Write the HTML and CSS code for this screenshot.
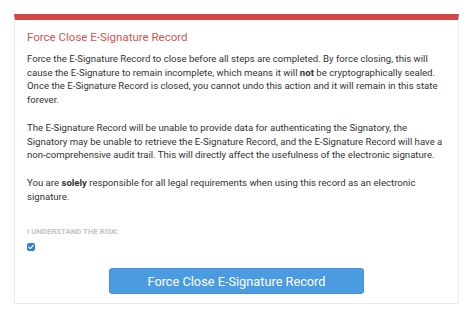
FILE: index.html
```html
<!DOCTYPE html>
<html>
<head>
<meta charset="utf-8">
<link rel="stylesheet" href="styles.css">
</head>
<body>
<div class="card">
  <h1 class="title">Force Close E-Signature Record</h1>
  <p class="text">Force the E-Signature Record to close before all steps are completed. By force closing, this will cause the E-Signature to remain incomplete, which means it will <b>not</b> be cryptographically sealed. Once the E-Signature Record is closed, you cannot undo this action and it will remain in this state forever.</p>
  <p class="text">The E-Signature Record will be unable to provide data for authenticating the Signatory, the Signatory may be unable to retrieve the E-Signature Record, and the E-Signature Record will have a non-comprehensive audit trail. This will directly affect the usefulness of the electronic signature.</p>
  <p class="text">You are <b>solely</b> responsible for all legal requirements when using this record as an electronic signature.</p>
  <div class="label">I UNDERSTAND THE RISK:</div>
  <span class="check"><svg width="8" height="8" viewBox="0 0 8 8"><path d="M1.8 4.2 L3.3 5.7 L6.2 2.3" fill="none" stroke="#fff" stroke-width="1.2" stroke-linecap="round" stroke-linejoin="round"/></svg></span>
  <div class="actions"><button class="btn">Force Close E-Signature Record</button></div>
</div>
</body>
</html>
```
FILE: styles.css
```css
html, body { margin: 0; padding: 0; background: #fff; }
body { padding: 14px 15px 0 14px; font-family: Roboto, "Noto Sans", sans-serif; }
.card {
  border: 1px solid #ebebeb;
  border-top: 6px solid #d44545;
  padding: 8px 12px 9px 12px;
  height: 290px;
  box-sizing: border-box;
  width: 445px;
}
.title { margin: 0 0 6px 0; font-size: 11.5px; font-weight: 400; color: #d9534f; line-height: 18px; }
.text { margin: 0 0 14px 0; font-size: 9.6px; line-height: 13.7px; color: #333; }
.text b { font-weight: 700; }
.label { font-size: 7.8px; font-weight: 700; color: #c4c4c4; line-height: 10px; margin-top: 24px; }
.check { display: block; width: 8px; height: 8px; background: #2f7fe2; border-radius: 2px; margin-top: 6px; }
.check svg { display: block; }
.actions { display: flex; justify-content: center; margin-top: 17px; }
.btn {
  width: 255px; height: 26px; background: #4b9be1; color: #fff; border: 1px solid #4590d6;
  border-radius: 3px; font-family: Roboto, sans-serif; font-size: 12.75px; padding: 0;
}
```
